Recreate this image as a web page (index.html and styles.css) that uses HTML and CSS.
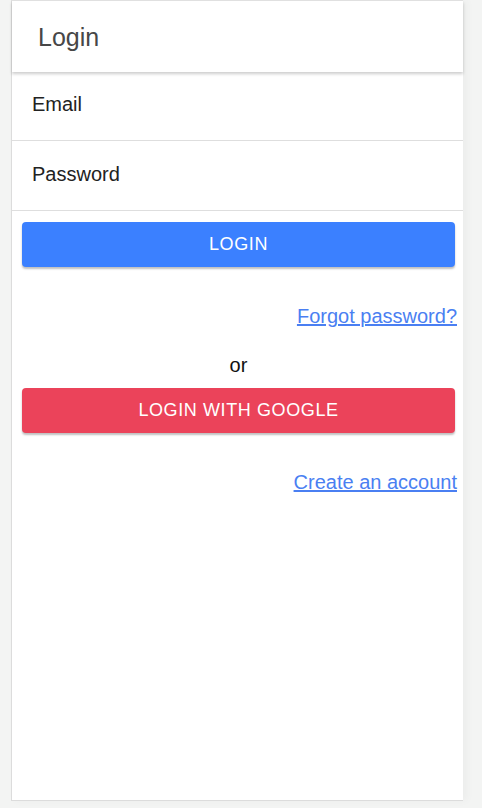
FILE: index.html
```html
<!DOCTYPE html>
<html lang="en">
<head>
<meta charset="utf-8">
<title>Login</title>
<link rel="stylesheet" href="styles.css">
</head>
<body>
<div class="card">
  <header class="card-header">
    <h1 class="title">Login</h1>
  </header>
  <div class="field"><span class="field-label">Email</span></div>
  <div class="field field-tall"><span class="field-label">Password</span></div>
  <div class="actions">
    <button class="btn btn-primary" type="button">LOGIN</button>
    <div class="link-row"><a class="link" href="#">Forgot password?</a></div>
    <div class="or">or</div>
    <button class="btn btn-google" type="button">LOGIN WITH GOOGLE</button>
    <div class="link-row"><a class="link" href="#">Create an account</a></div>
  </div>
</div>
</body>
</html>
```

FILE: styles.css
```css
html, body {
  margin: 0;
  padding: 0;
}

body {
  background: #f3f4f3;
  font-family: "Liberation Sans", Arial, sans-serif;
  height: 808px;
  overflow: hidden;
}

.card {
  margin-left: 11px;
  width: 451px;
  height: 799px;
  background: #ffffff;
  border-top: 1px solid #e2e2e2;
  border-left: 1px solid #dcdcdc;
  border-bottom: 1px solid #dcdcdc;
  box-shadow: 4px 0 8px rgba(0, 0, 0, 0.03);
}

.card-header {
  height: 71px;
  display: flex;
  align-items: center;
  padding-left: 26px;
  box-shadow: 0 2px 3px rgba(0, 0, 0, 0.2);
  position: relative;
}

.title {
  margin: 0;
  font-weight: normal;
  font-size: 25px;
  color: #474747;
  padding-top: 1px;
}

.field {
  box-sizing: border-box;
  height: 69px;
  display: flex;
  align-items: center;
  padding-left: 20px;
  padding-bottom: 3px;
  border-bottom: 1px solid #dedede;
}

.field-tall {
  height: 70px;
}

.field-label {
  font-size: 20px;
  color: #222222;
}

.actions {
  padding: 11px 8px 0 10px;
  display: flex;
  flex-direction: column;
}

.btn {
  height: 45px;
  border: none;
  border-radius: 4px;
  color: #ffffff;
  font-family: "Liberation Sans", Arial, sans-serif;
  font-size: 18px;
  letter-spacing: 0.6px;
  box-shadow: 0 2px 2px rgba(0, 0, 0, 0.25);
  padding: 0;
  cursor: pointer;
}

.btn-primary {
  background: #3b80ff;
}

.btn-google {
  background: #eb435a;
}

.link-row {
  margin-top: 38px;
  margin-right: -2px;
  text-align: right;
  line-height: 23px;
}

.link {
  font-size: 20px;
  color: #4a7ff2;
  text-decoration: underline;
}

.or {
  margin-top: 25px;
  margin-bottom: 11px;
  text-align: center;
  font-size: 20px;
  line-height: 23px;
  color: #111111;
}
```
